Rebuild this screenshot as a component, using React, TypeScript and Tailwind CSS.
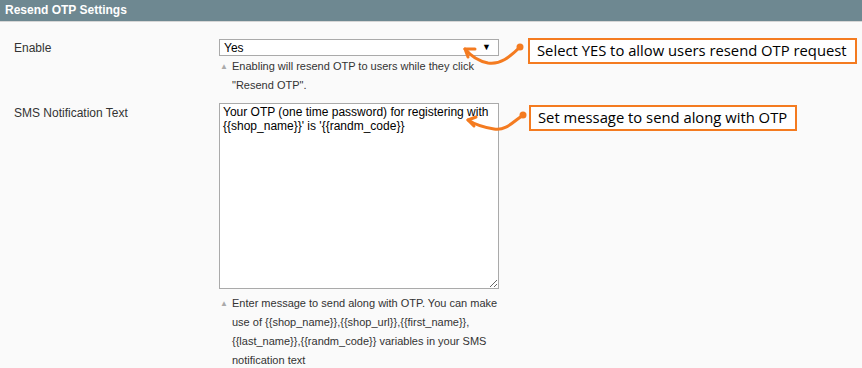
import React from "react";

const arial = { fontFamily: '"Liberation Sans", Arial, sans-serif' };

function Note({ children }: { children: React.ReactNode }) {
  return (
    <div className="flex text-[11px] leading-[19px] text-[#333]">
      <span className="w-[13px] shrink-0 pl-[1px] text-[8px] text-[#aaa]">▲</span>
      <span>{children}</span>
    </div>
  );
}

function Callout({ children, className }: { children: React.ReactNode; className: string }) {
  return (
    <div
      className={`absolute border-2 border-[#f47b20] bg-white px-[7px] text-[14.8px] leading-[21px] text-black ${className}`}
      style={{ fontFamily: '"Open Sans", "Noto Sans", sans-serif' }}
    >
      {children}
    </div>
  );
}

export default function App() {
  return (
    <div className="relative h-[368px] w-[862px] overflow-hidden bg-[#fafafa]" style={arial}>
      <div className="h-[22px] border-b border-[#d6d6d6] bg-[#6e8891] pl-[5px] text-[12px] font-bold leading-[21px] text-white">
        Resend OTP Settings
      </div>

      <div className="flex pt-[17px]">
        <div className="w-[219px] pl-[14px] pt-[1px] text-[12px] leading-[16px] text-[#333]">Enable</div>
        <div className="w-[280px]">
          <div className="flex h-[17px] items-center justify-between border border-[#aaa] bg-white pl-[4px] pr-[7px] text-[12px] text-black">
            <span>Yes</span>
            <span className="text-[9px]">▼</span>
          </div>
          <div className="pt-[1px]">
            <Note>
              Enabling will resend OTP to users while they click
              <br />
              "Resend OTP".
            </Note>
          </div>
        </div>
      </div>

      <div className="flex pt-[8px]">
        <div className="w-[219px] pl-[14px] pt-[2px] text-[12px] leading-[16px] text-[#333]">
          SMS Notification Text
        </div>
        <div className="w-[280px]">
          <textarea
            className="block h-[186px] w-[280px] resize border border-[#aaa] bg-white px-[3px] py-[1px] text-[12px] leading-[14px] text-black outline-none"
            style={arial}
            defaultValue={"Your OTP (one time password) for registering with {{shop_name}}' is '{{randm_code}}"}
          />
          <div className="pt-[5px]">
            <Note>
              Enter message to send along with OTP. You can make
              <br />
              use of {"{{shop_name}},{{shop_url}},{{first_name}},"}
              <br />
              {"{{last_name}},{{randm_code}}"} variables in your SMS
              <br />
              notification text
            </Note>
          </div>
        </div>
      </div>

      <Callout className="left-[528px] top-[38px] h-[26px] w-[329px]">Select YES to allow users resend OTP request</Callout>
      <Callout className="left-[529px] top-[105px] h-[26px] w-[268px]">Set message to send along with OTP</Callout>

      <svg className="pointer-events-none absolute left-0 top-0" width="862" height="368">
        <g fill="none" stroke="#f47b20" strokeWidth="3" strokeLinecap="round" strokeLinejoin="round">
          <path d="M520 47 C510 57 500 65 488 63 C478 61 470 55 465 49" />
          <path d="M465 49 L475 49 M465 49 L468 57" />
          <path d="M523 115 C512 123 505 131 494 129 C482 127 474 124 468 120" />
          <path d="M468 120 L476 117 M468 120 L474 126" />
        </g>
        <circle cx="520" cy="47" r="3.5" fill="#f47b20" />
        <circle cx="523" cy="115" r="3.5" fill="#f47b20" />
      </svg>
    </div>
  );
}
